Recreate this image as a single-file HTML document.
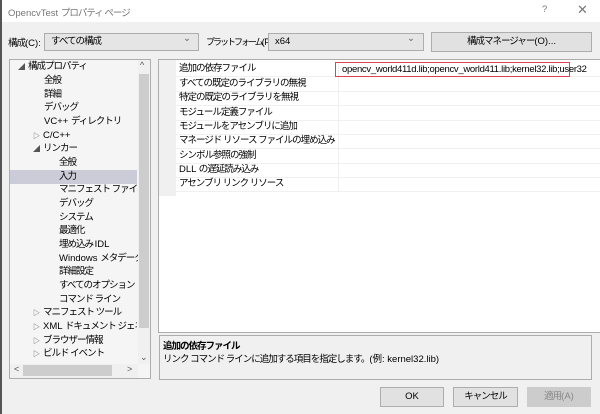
<!DOCTYPE html>
<html><head><meta charset="utf-8"><style>
*{margin:0;padding:0;box-sizing:border-box}
body{width:600px;height:414px;background:#f0f0f0;font-family:"Liberation Sans","Noto Sans CJK JP",sans-serif;font-size:9.5px;letter-spacing:-1px;color:#000;position:relative;overflow:hidden}
.l{letter-spacing:0}
.a{position:absolute;white-space:nowrap}
.combo{position:absolute;background:#e5e5e5;border:1px solid #adadad;height:18px;line-height:16px;padding-left:6px}
.combo:after{content:"⌄";position:absolute;right:8px;top:-3px;color:#666}
.btn{position:absolute;background:#e1e1e1;border:1px solid #adadad;height:20px;line-height:18px;text-align:center}
.t{position:absolute;white-space:nowrap;height:14px;line-height:14px}
.row{position:absolute;left:176px;width:424px;height:15px;border-bottom:1px solid #f0f0f0;line-height:14px}
.row>span{position:absolute;left:3px}
.row:before{content:"";position:absolute;left:162px;top:0;bottom:-1px;border-left:1px solid #f0f0f0}
.tri{font-size:7px;color:#555;letter-spacing:3px}
</style></head><body>
<div class="a" style="left:0;top:0;width:600px;height:22px;background:#fff"></div>
<div class="a" style="left:0;top:0;width:2px;height:414px;background:#555"></div>
<div class="a" style="left:8px;top:5px;color:#777"><span class="l">OpencvTest </span>プロパティ ページ</div>
<div class="a" style="left:542px;top:4px;color:#777">?</div>
<div class="a" style="left:577px;top:2px;color:#777;font-size:13px">✕</div>

<div class="a" style="left:8px;top:35px">構成<span class="l">(C):</span></div>
<div class="combo" style="left:44px;top:33px;width:155px">すべての構成</div>
<div class="a" style="left:206px;top:35px;font-size:9px;letter-spacing:-2px">プラットフォーム<span style="letter-spacing:-0.5px">(P):</span></div>
<div class="combo l" style="left:268px;top:33px;width:156px">x64</div>
<div class="btn" style="left:431px;top:32px;width:161px">構成マネージャー<span class="l">(O)...</span></div>

<!-- tree -->
<div class="a" style="left:9px;top:59px;width:142px;height:320px;border:1px solid #adadad;background:#f5f5f5"></div>
<div class="a" style="left:10px;top:170px;width:127px;height:14px;background:#ccccd8"></div>
<div class="t" style="left:18px;top:60px"><span class="tri">◢</span>構成プロパティ</div>
<div class="t" style="left:44px;top:74px">全般</div>
<div class="t" style="left:44px;top:88px">詳細</div>
<div class="t" style="left:44px;top:101px">デバッグ</div>
<div class="t" style="left:44px;top:115px"><span class="l">VC++ </span>ディレクトリ</div>
<div class="t" style="left:33px;top:129px"><span class="tri">▷</span><span class="l">C/C++</span></div>
<div class="t" style="left:33px;top:142px"><span class="tri">◢</span>リンカー</div>
<div class="t" style="left:59px;top:156px">全般</div>
<div class="t" style="left:59px;top:170px">入力</div>
<div class="t" style="left:59px;top:183px">マニフェスト ファイル</div>
<div class="t" style="left:59px;top:197px">デバッグ</div>
<div class="t" style="left:59px;top:211px">システム</div>
<div class="t" style="left:59px;top:224px">最適化</div>
<div class="t" style="left:59px;top:238px">埋め込み <span class="l">IDL</span></div>
<div class="t" style="left:59px;top:252px"><span class="l">Windows </span>メタデータ</div>
<div class="t" style="left:59px;top:265px">詳細設定</div>
<div class="t" style="left:59px;top:279px">すべてのオプション</div>
<div class="t" style="left:59px;top:293px">コマンド ライン</div>
<div class="t" style="left:33px;top:306px"><span class="tri">▷</span>マニフェスト ツール</div>
<div class="t" style="left:33px;top:320px;width:104px;overflow:hidden"><span class="tri">▷</span><span class="l">XML </span>ドキュメント ジェネレーター</div>
<div class="t" style="left:33px;top:334px"><span class="tri">▷</span>ブラウザー情報</div>
<div class="t" style="left:33px;top:347px"><span class="tri">▷</span>ビルド イベント</div>
<div class="a" style="left:138px;top:60px;width:12px;height:304px;background:#f0f0f0"></div>
<div class="a" style="left:139px;top:74px;width:10px;height:254px;background:#cdcdcd"></div>
<div class="a" style="left:140px;top:60px;color:#555;font-size:9px">^</div>
<div class="a" style="left:140px;top:352px;color:#555;font-size:9px">⌄</div>
<div class="a" style="left:10px;top:364px;width:128px;height:14px;background:#f0f0f0"></div>
<div class="a" style="left:23px;top:365px;width:89px;height:11px;background:#cdcdcd"></div>
<div class="a" style="left:14px;top:364px;color:#555;font-size:9px">&lt;</div>
<div class="a" style="left:127px;top:364px;color:#555;font-size:9px">&gt;</div>

<!-- grid -->
<div class="a" style="left:158px;top:59px;width:442px;height:274px;border:1px solid #adadad;border-right:none;background:#fff"></div>
<div class="a" style="left:159px;top:60px;width:17px;height:136px;background:#f0f0f0"></div>
<div class="row" style="top:62px"><span>追加の依存ファイル</span></div>
<div class="row" style="top:77px"><span>すべての既定のライブラリの無視</span></div>
<div class="row" style="top:91px"><span>特定の既定のライブラリを無視</span></div>
<div class="row" style="top:106px"><span>モジュール定義ファイル</span></div>
<div class="row" style="top:120px"><span>モジュールをアセンブリに追加</span></div>
<div class="row" style="top:134px"><span>マネージド リソース ファイルの埋め込み</span></div>
<div class="row" style="top:149px"><span>シンボル参照の強制</span></div>
<div class="row" style="top:163px"><span><span class="l">DLL </span>の遅延読み込み</span></div>
<div class="row" style="top:177px"><span>アセンブリ リンク リソース</span></div>
<div class="a" style="left:335px;top:62px;width:235px;height:15px;border:1px solid #e04050"></div>
<div class="a" style="left:342px;top:63px;line-height:13px;letter-spacing:-0.3px">opencv_world411d.lib;opencv_world411.lib;kernel32.lib;user32</div>

<!-- description -->
<div class="a" style="left:159px;top:335px;width:433px;height:45px;border:1px solid #adadad;background:#f0f0f0"></div>
<div class="a" style="left:163px;top:338px;font-weight:bold">追加の依存ファイル</div>
<div class="a" style="left:163px;top:351px">リンク コマンド ラインに追加する項目を指定します。<span class="l">(例: kernel32.lib)</span></div>

<div class="btn l" style="left:380px;top:387px;width:64px">OK</div>
<div class="btn" style="left:453px;top:387px;width:65px">キャンセル</div>
<div class="btn" style="left:527px;top:387px;width:64px;background:#ccc;border-color:#ccc;color:#888">適用<span class="l">(A)</span></div>
</body></html>
